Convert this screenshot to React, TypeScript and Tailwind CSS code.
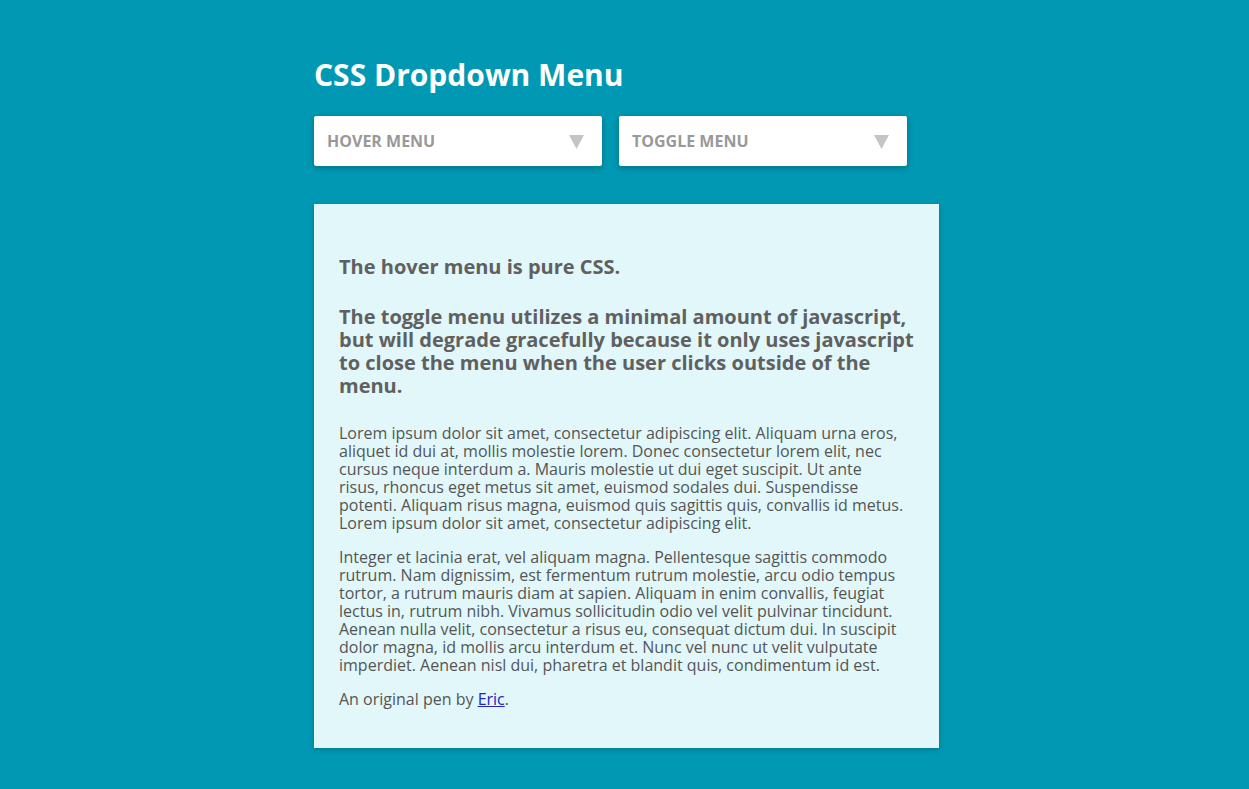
const FONT = { fontFamily: '"Open Sans", "Noto Sans", sans-serif' }

function MenuButton({ label }: { label: string }) {
  return (
    <div className="flex h-[50px] w-[288px] items-center justify-between rounded-[2px] bg-white pl-[13px] pr-[18px] shadow-[0_2px_6px_rgba(0,0,0,0.25)]">
      <span className="text-[16px] font-bold uppercase text-[#999]">{label}</span>
      <svg width="15" height="14" viewBox="0 0 15 14" className="mt-[2px]">
        <polygon points="0,0 15,0 7.5,14" fill="#c4c4c4" />
      </svg>
    </div>
  )
}

export default function App() {
  return (
    <div className="min-h-screen bg-[#0098b3] pb-10 pt-[57px]" style={FONT}>
      <div className="ml-[314px] w-[625px]">
        <h1 className="text-[30px] font-bold leading-[36px] text-white">CSS Dropdown Menu</h1>
        <div className="mt-[23px] flex gap-[17px]">
          <MenuButton label="Hover Menu" />
          <MenuButton label="Toggle Menu" />
        </div>
        <div className="mt-[38px] bg-[#e1f7f9] px-[25px] pb-[24px] pt-[24px] shadow-[0_2px_6px_rgba(0,0,0,0.2)]">
          <h3 className="my-[27px] text-[20px] font-bold leading-[23px] text-[#606060]">
            The hover menu is pure CSS.
          </h3>
          <h3 className="my-[27px] text-[20px] font-bold leading-[23px] text-[#606060]">
            The toggle menu utilizes a minimal amount of javascript, but will degrade gracefully because it
            only uses javascript to close the menu when the user clicks outside of the menu.
          </h3>
          <div className="text-[16px] leading-[18px] text-[#555]">
            <p className="my-4">
              Lorem ipsum dolor sit amet, consectetur adipiscing elit. Aliquam urna eros, aliquet id dui at,
              mollis molestie lorem. Donec consectetur lorem elit, nec cursus neque interdum a. Mauris molestie
              ut dui eget suscipit. Ut ante
              <br />
              risus, rhoncus eget metus sit amet, euismod sodales dui. Suspendisse potenti. Aliquam risus
              magna, euismod quis sagittis quis, convallis id metus. Lorem ipsum dolor sit amet, consectetur
              adipiscing elit.
            </p>
            <p className="my-4">
              Integer et lacinia erat, vel aliquam magna. Pellentesque sagittis commodo rutrum. Nam dignissim,
              est fermentum rutrum molestie, arcu odio tempus tortor, a rutrum mauris diam at sapien. Aliquam in
              enim convallis, feugiat lectus in, rutrum nibh. Vivamus sollicitudin odio vel velit pulvinar
              tincidunt. Aenean nulla velit, consectetur a risus eu, consequat dictum dui. In suscipit dolor
              magna, id mollis arcu interdum et. Nunc vel nunc ut velit vulputate imperdiet. Aenean nisl dui,
              pharetra et blandit quis, condimentum id est.
            </p>
            <p className="mb-4 mt-4">
              An original pen by{' '}
              <a href="#" className="text-[#2424c4] underline">
                Eric
              </a>
              .
            </p>
          </div>
        </div>
      </div>
    </div>
  )
}
